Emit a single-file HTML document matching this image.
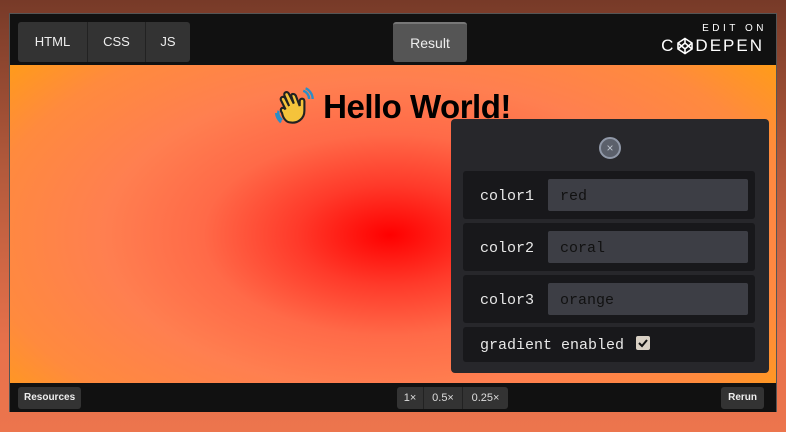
<!DOCTYPE html>
<html><head><meta charset="utf-8"><style>
*{box-sizing:border-box;margin:0;padding:0}
body{width:786px;height:432px;overflow:hidden;background:linear-gradient(180deg,#773a28 0%,#b45a3c 40%,#e7714b 80%,#ec754d 100%);font-family:"Liberation Sans",sans-serif;position:relative}
.frame{position:absolute;left:9px;top:13px;width:768px;height:399px;border:1px solid #555;background:#111}
.top{position:absolute;left:0;top:0;width:766px;height:51px;background:#111}
.tabs{position:absolute;left:8px;top:8px;height:40px;display:flex}
.tab{background:#333;color:#eee;font-size:13px;line-height:40px;text-align:center;border-right:1px solid #222}
.tab:first-child{border-radius:3px 0 0 3px}
.tab:last-child{border-radius:0 3px 3px 0;border-right:0}
.result{position:absolute;left:383px;top:8px;width:74px;height:40px;background:#555;border-top:2px solid #777;border-radius:3px;color:#eee;font-size:14px;line-height:38px;text-align:center}
.edit{position:absolute;right:12px;top:9px;color:#fff;text-align:right}
.edit .a{font-size:10px;letter-spacing:3.5px;margin-right:-3px}
.edit .b{font-size:17px;letter-spacing:2px;margin-top:2px;display:flex;align-items:center;justify-content:flex-end}
.content{position:absolute;left:0;top:51px;width:766px;height:318px;overflow:hidden;background:radial-gradient(ellipse 520px 280px at 380px 170px,#ff0000 0%,#ff3a2a 18%,#ff6a48 36%,#ff7f50 55%,#ff8a3e 78%,#ffa010 100%),#ffa500}
h1{position:absolute;left:0;width:766px;top:22px;text-align:center;font-size:33px;font-weight:bold;color:#000;letter-spacing:-0.5px}
.panel{position:absolute;left:441px;top:54px;width:318px;height:254px;background:#27272b;border-radius:4px}
.close{position:absolute;left:148px;top:18px;width:22px;height:22px;border-radius:50%;background:#5b606b;border:2px solid #9098a8;color:#c0c6d0;font-size:12px;text-align:center;line-height:18px}
.row{position:absolute;left:12px;width:292px;background:#18181b;border-radius:3px;font-family:"Liberation Mono",monospace;color:#e8e8e8;font-size:15px}
.row .l{position:absolute;left:17px}
.row .in{position:absolute;left:85px;top:8px;width:200px;height:32px;background:#3d3e45;border-radius:2px;color:#111;padding-left:12px;line-height:35px}
.chk{display:inline-block;width:14px;height:14px;background:#d8d0c4;border-radius:2px;vertical-align:middle;margin-left:12px;position:relative;top:-2px}
.bot{position:absolute;left:0;top:369px;width:766px;height:29px;background:#111}
.btn{position:absolute;top:4px;height:22px;background:#333;color:#eee;font-size:10px;font-weight:bold;line-height:22px;padding:0 7px;border-radius:3px}
.zm{position:absolute;left:387px;top:4px;height:22px;display:flex}
.zm div{background:#333;color:#ddd;font-size:11px;line-height:22px;text-align:center;border-right:1px solid #222}
</style></head><body>
<div class="frame">
 <div class="top">
  <div class="tabs"><div class="tab" style="width:70px">HTML</div><div class="tab" style="width:58px">CSS</div><div class="tab" style="width:44px">JS</div></div>
  <div class="result">Result</div>
  <div class="edit"><div class="a">EDIT ON</div><div class="b">C<svg width="18" height="18" viewBox="0 0 18 18" style="margin:0 1px"><g fill="none" stroke="#fff" stroke-width="1.6"><path d="M9 1.5 16 6v6l-7 4.5L2 12V6z"/><path d="M9 1.5V6M9 12v4.5M2 6l7 6 7-6M2 12l7-6 7 6"/></g></svg>DEPEN</div></div>
 </div>
 <div class="content">
  <h1><svg width="40" height="38" viewBox="0 0 34 32" style="vertical-align:-7px;margin-right:8px"><path d="M6 22c-3-4 1-6 3-3l-4-8c-1-3 3-4 4-1l3 6-4-9c-1-3 3-4 4-1l4 8-2-6c-1-3 3-3 4 0l3 8 0-4c0-3 4-3 4 0l0 8c0 7-6 11-12 10-3 0-6-3-7-8z" fill="#f5c33b" stroke="#222" stroke-width="1.8"/><path d="M3 20c-1 3 1 6 3 8M1 22c0 3 2 6 4 8M24 3c3 1 5 4 5 7M26 1c3 1 6 5 6 9" stroke="#2a8ec8" stroke-width="2" fill="none"/></svg>Hello World!</h1>
  <div class="panel">
   <div class="close">×</div>
   <div class="row" style="top:52px;height:48px"><span class="l" style="top:17px">color1</span><div class="in">red</div></div>
   <div class="row" style="top:104px;height:48px"><span class="l" style="top:17px">color2</span><div class="in">coral</div></div>
   <div class="row" style="top:156px;height:48px"><span class="l" style="top:17px">color3</span><div class="in">orange</div></div>
   <div class="row" style="top:208px;height:35px"><span class="l" style="top:10px">gradient enabled<span class="chk"><svg width="14" height="14" viewBox="0 0 14 14"><path d="M3 7l3 3 5-6" stroke="#111" stroke-width="2" fill="none"/></svg></span></span></div>
  </div>
 </div>
 <div class="bot">
  <div class="btn" style="left:8px;padding:0 6px">Resources</div>
  <div class="zm"><div style="width:27px;border-radius:3px 0 0 3px">1×</div><div style="width:39px">0.5×</div><div style="width:45px;border-radius:0 3px 3px 0;border:0">0.25×</div></div>
  <div class="btn" style="right:12px">Rerun</div>
 </div>
</div>
</body></html>
